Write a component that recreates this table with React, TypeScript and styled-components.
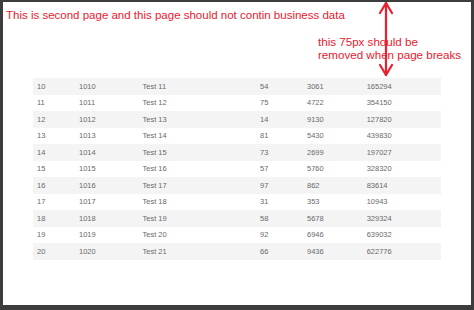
import React from "react";
import styled, { createGlobalStyle } from "styled-components";

const GlobalStyle = createGlobalStyle`
    html, body {
        margin: 0;
        padding: 0;
        background: #3d3d3d;
    }
`

const Frame = styled.div`
    box-sizing: border-box;
    width: 474px;
    height: 310px;
    padding: 2px 3px 5px 3px;
    background-color: #3d3d3d;
    display: flex;
`

const Page = styled.div`
    position: relative;
    flex: 1;
    background-color: #ffffff;
    display: flex;
    flex-direction: column;
    font-family: "Liberation Sans", Arial, sans-serif;
`

const Title = styled.div`
    color: #e8202f;
    font-size: 11.5px;
    line-height: 16px;
    margin: 5px 0 0 3px;
    white-space: nowrap;
`

const Note = styled.div`
    color: #e8202f;
    font-size: 11.6px;
    line-height: 13px;
    margin: 12px 0 0 315px;
    white-space: nowrap;
`

const Arrow = styled.svg`
    position: absolute;
    left: 372px;
    top: 0;
`

const Table = styled.table`
    margin: 17px 0 0 30px;
    width: 408px;
    border-collapse: collapse;
    table-layout: fixed;
    color: #6a6a6a;
    font-size: 7.5px;
`

const Row = styled.tr<{ $striped: boolean }>`
    height: 16.5px;
    background-color: ${p => (p.$striped ? "#f4f4f4" : "#ffffff")};
`

const Cell = styled.td<{ $w?: number }>`
    box-sizing: border-box;
    padding: 0 0 0 4px;
    width: ${p => (p.$w ? `${p.$w}px` : "auto")};
    white-space: nowrap;
`

const rows = [
    [10, 1010, "Test 11", 54, 3061, 165294],
    [11, 1011, "Test 12", 75, 4722, 354150],
    [12, 1012, "Test 13", 14, 9130, 127820],
    [13, 1013, "Test 14", 81, 5430, 439830],
    [14, 1014, "Test 15", 73, 2699, 197027],
    [15, 1015, "Test 16", 57, 5760, 328320],
    [16, 1016, "Test 17", 97, 862, 83614],
    [17, 1017, "Test 18", 31, 353, 10943],
    [18, 1018, "Test 19", 58, 5678, 329324],
    [19, 1019, "Test 20", 92, 6946, 639032],
    [20, 1020, "Test 21", 66, 9436, 622776],
];

const widths = [42, 63.5, 117.5, 47, 59.7, 78.3];

const App = () => {
    return (
        <>
            <GlobalStyle />
            <Frame>
                <Page>
                    <Title>This is second page and this page should not contin business data</Title>
                    <Note>
                        this 75px should be
                        <br />
                        removed when page breaks
                    </Note>
                    <Arrow width="22" height="78" viewBox="0 0 22 78">
                        <g stroke="#e8202f" strokeWidth="2.2" fill="none" strokeLinecap="round" strokeLinejoin="round">
                            <line x1="11" y1="1" x2="11" y2="73" />
                            <polyline points="5,11 11,1 17,11" />
                            <polyline points="5,63 11,73 17,63" />
                        </g>
                    </Arrow>
                    <Table>
                        <tbody>
                            {rows.map((r, i) => (
                                <Row key={i} $striped={i % 2 === 0}>
                                    {r.map((v, j) => (
                                        <Cell key={j} $w={widths[j]}>{v}</Cell>
                                    ))}
                                </Row>
                            ))}
                        </tbody>
                    </Table>
                </Page>
            </Frame>
        </>
    );
};

export default App;
